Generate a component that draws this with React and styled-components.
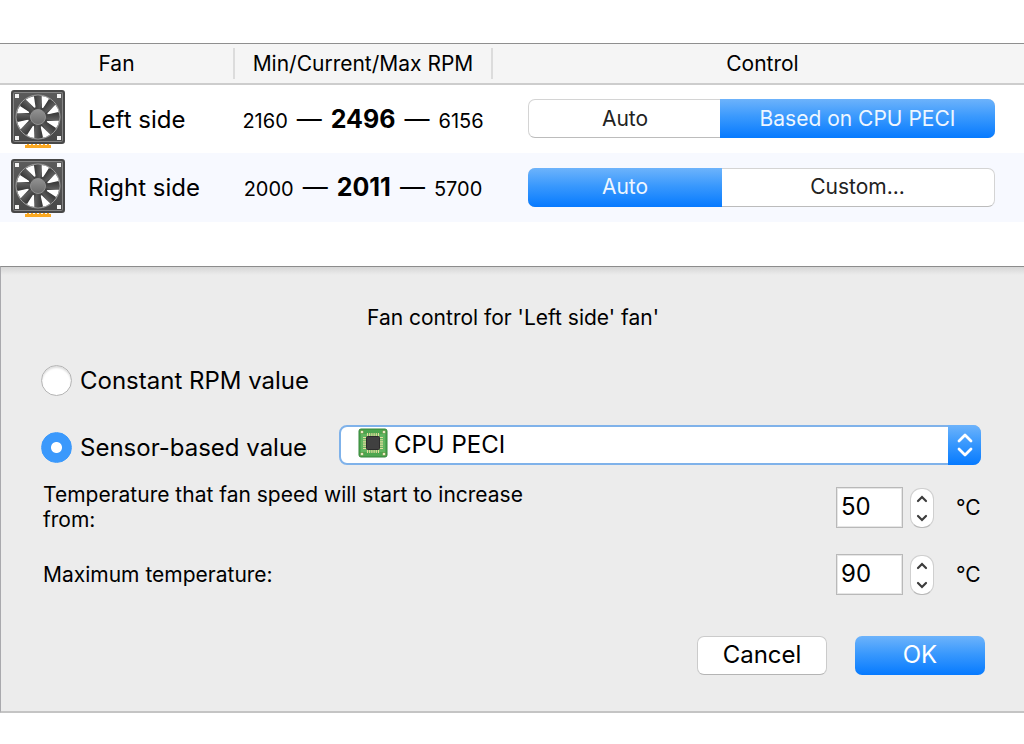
import React, { useState } from "react";
import styled, { createGlobalStyle, css } from "styled-components";

const GlobalStyle = createGlobalStyle`
  * { box-sizing: border-box; }
  body {
    margin: 0;
    background: #fff;
    color: #000;
    font-family: Inter, "Liberation Sans", sans-serif;
  }
  button, input, select { font: inherit; color: inherit; }
`;

const blueFill = css`
  background: linear-gradient(#6db3fb, #3a99fd 45%, #067aff);
`;

const Page = styled.main`
  padding-top: 43px;
`;

const FanTable = styled.table`
  width: 100%;
  table-layout: fixed;
  border-collapse: collapse;
  border-top: 1px solid #8f8f8f;
`;

const HeadRow = styled.tr`
  height: 40px;
  background: #f5f5f5;
  border-bottom: 2px solid #cdcdcd;
`;

const HeadCell = styled.th`
  width: ${({ $width }) => $width || "auto"};
  padding: 0;
  font-size: 21px;
  font-weight: 400;
`;

const HeadLabel = styled.div`
  line-height: 31px;
  border-right: ${({ $last }) => ($last ? "0" : "2px solid #dcdcdc")};
  padding-left: ${({ $last }) => ($last ? "8px" : "0")};
`;

const FanRow = styled.tr`
  height: 69px;
  background: ${({ $striped }) => ($striped ? "#f7f9ff" : "#fff")};
`;

const Cell = styled.td`
  padding: 0;
`;

const FanName = styled.div`
  display: flex;
  align-items: center;
  gap: 23px;
  padding: 1px 0 0 11px;
  font-size: 24px;
`;

const Speeds = styled.div`
  display: flex;
  justify-content: center;
  align-items: baseline;
  gap: 9px;
  padding-right: 2px;
  font-size: 20px;
`;

const Dash = styled.span`
  font-size: 25px;
`;

const CurrentSpeed = styled.strong`
  font-size: 25px;
  font-weight: 700;
`;

const Segments = styled.div`
  display: flex;
  height: 39px;
  margin: 0 29px 0 35px;
  border: 1px solid #d4d4d4;
  border-bottom-color: #bcbcbc;
  border-radius: 7px;
  background: #fff;
`;

const Segment = styled.button`
  flex: ${({ $grow }) => ($grow ? "1" : "0 0 194px")};
  margin: -1px;
  padding: 0 0 1px;
  border: 0;
  border-radius: ${({ $grow }) => ($grow ? "0 7px 7px 0" : "7px 0 0 7px")};
  background: transparent;
  font-size: 21px;
  color: #222;
  ${({ $active }) => $active && css`
    ${blueFill}
    color: #eef6ff;
  `}
`;

const Sheet = styled.form`
  margin-top: 44px;
  padding: 38px 39px 36px 40px;
  border: solid #a9a9ad;
  border-width: 1px 0 2px 1px;
  border-top-color: #8c8c8c;
  border-bottom-color: #c4c4c4;
  background: linear-gradient(#d6d6d6, #ececec 8px);
`;

const Title = styled.h1`
  margin: 0;
  font-size: 21px;
  line-height: 26px;
  font-weight: 400;
  text-align: center;
`;

const Options = styled.div`
  display: grid;
  gap: 15px;
  padding: 24px 4px 0 0;
`;

const Row = styled.div`
  display: flex;
  align-items: center;
  height: 52px;
`;

const RadioLabel = styled.label`
  display: flex;
  align-items: center;
  gap: 8px;
  width: 298px;
  font-size: 24px;
  white-space: nowrap;
`;

const Radio = styled.input`
  appearance: none;
  flex: none;
  width: 31px;
  height: 31px;
  margin: 0;
  border: 1px solid #b4b4b4;
  border-radius: 50%;
  background: #fff;
  box-shadow: inset 0 2px 2px #dedede;
  &:checked {
    border-color: #3b99fc;
    background: radial-gradient(circle, #fff 5px, #3b99fc 6px);
    box-shadow: none;
  }
`;

const SelectFrame = styled.div`
  position: relative;
  flex: 1;
  height: 40px;
  margin-bottom: 6px;
`;

const SensorSelect = styled.select`
  appearance: none;
  display: block;
  width: 100%;
  height: 40px;
  padding: 0 40px 1px 53px;
  border: 2px solid #7fb2ea;
  border-radius: 8px;
  background: #fff;
  font-size: 24px;
`;

const ChipMark = styled.span`
  position: absolute;
  left: 19px;
  top: 3px;
  display: flex;
  pointer-events: none;
`;

const SelectCap = styled.span`
  position: absolute;
  top: 0;
  right: 0;
  display: grid;
  place-items: center;
  width: 33px;
  height: 40px;
  border-radius: 0 8px 8px 0;
  pointer-events: none;
  ${blueFill}
`;

const LimitRow = styled.div`
  display: flex;
  align-items: center;
  height: 67px;
  padding-right: 4px;
  font-size: 21px;
  line-height: 25px;
`;

const LimitLabel = styled.label`
  width: 510px;
  margin-right: auto;
  padding-left: 2px;
`;

const NumberInput = styled.input`
  width: 67px;
  height: 41px;
  padding: 0 4px 1px;
  border: 1px solid #b9b9b9;
  border-radius: 0;
  background: #fff;
  box-shadow: inset 0 0 0 1px #e6e6e6;
  font-size: 24px;
`;

const Stepper = styled.div`
  display: flex;
  flex-direction: column;
  width: 24px;
  height: 40px;
  margin: 2px 22px 0 7px;
  border: 1px solid #cfcfcf;
  border-bottom-color: #b8b8b8;
  border-radius: 11px;
  background: #fff;
`;

const StepButton = styled.button`
  display: grid;
  place-items: center;
  flex: 1;
  padding: 0;
  border: 0;
  background: transparent;
`;

const Unit = styled.span`
  width: 25px;
`;

const Actions = styled.div`
  display: flex;
  justify-content: flex-end;
  gap: 28px;
  margin-top: 28px;
`;

const ActionButton = styled.button`
  width: 130px;
  height: 39px;
  padding: 0 0 1px;
  border: 1px solid #cbcbcb;
  border-bottom-color: #b4b4b4;
  border-radius: 7px;
  background: #fff;
  font-size: 24px;
  ${({ $primary }) => $primary && css`
    border: 0;
    ${blueFill}
    color: #fff;
  `}
`;

const BLADES = [0, 1, 2, 3, 4, 5, 6, 7];

function FanIcon({ id }) {
  return (
    <svg width="54" height="58" viewBox="0 0 54 58" aria-hidden="true">
      <defs>
        <linearGradient id={`${id}-frame`} x2="0" y2="1">
          <stop offset="0" stopColor="#5c5c5c" />
          <stop offset="1" stopColor="#484848" />
        </linearGradient>
        <linearGradient id={`${id}-blade`}>
          <stop offset="0" stopColor="#333" />
          <stop offset="1" stopColor="#666" />
        </linearGradient>
        <linearGradient id={`${id}-hub`} x2="0" y2="1">
          <stop offset="0" stopColor="#929292" />
          <stop offset="1" stopColor="#6a6a6a" />
        </linearGradient>
      </defs>
      <path d="M14 55h26v3H14zM16 53h2v3h-2zM20 53h2v3h-2zM24 53h2v3h-2zM28 53h2v3h-2zM32 53h2v3h-2zM36 53h2v3h-2z" fill="#fba922" />
      <rect x="1" y="1" width="52" height="52" rx="2" fill={`url(#${id}-frame)`} stroke="#484848" strokeWidth="2" />
      <rect x="2.500" y="2.500" width="49" height="49" rx="1" fill="none" stroke="#858585" />
      <path d="M4 4h4v4H4zM46 4h4v4h-4zM4 46h4v4H4zM46 46h4v4h-4z" fill="#f4f4f4" />
      <circle cx="27" cy="27" r="22" fill="#444" stroke="#a2a2a2" />
      {BLADES.map((n) => (
        <g key={n} transform={`rotate(${n * 45} 27 27)`}>
          <path d="M25 20 L22 6.500 Q27 5 31.500 6.500 L29 20Z" fill={`url(#${id}-blade)`} />
          <path d="M27.200 17 L22.600 6.200 Q27 5 31.400 6.200 L28.600 17Z" fill="#fff" transform="rotate(22 27 27)" />
        </g>
      ))}
      <circle cx="27" cy="27" r="7.500" fill={`url(#${id}-hub)`} stroke="#8f8f8f" />
    </svg>
  );
}

function ChipIcon() {
  return (
    <svg width="30" height="30" viewBox="0 0 30 30" aria-hidden="true">
      <rect x="1" y="1" width="28" height="28" rx="2" fill="#4da64f" stroke="#358538" />
      <rect x="3" y="6" width="24" height="18" fill="#62b560" />
      <g fill="#f3f3cf" stroke="#6b8b3d" strokeWidth=".6">
        <circle cx="4" cy="4" r="1.600" /><circle cx="26" cy="4" r="1.600" />
        <circle cx="4" cy="26" r="1.600" /><circle cx="26" cy="26" r="1.600" />
      </g>
      <path d="M9.500 5v20M11.700 5v20M13.900 5v20M16.100 5v20M18.300 5v20M20.500 5v20M5 9.500h20M5 11.700h20M5 13.900h20M5 16.100h20M5 18.300h20M5 20.500h20" stroke="#e6dc9c" strokeWidth="1.100" />
      <rect x="8.500" y="8.500" width="13" height="13" rx="1" fill="#404040" stroke="#2c2c2c" />
    </svg>
  );
}

function Chevron({ up }) {
  return (
    <svg width="12" height="8" viewBox="0 0 12 8" aria-hidden="true">
      <path d={up ? "M2 6l4-4 4 4" : "M2 2l4 4 4-4"} fill="none" stroke="#3c3c3c" strokeWidth="2.200" strokeLinecap="round" />
    </svg>
  );
}

const FANS = [
  { id: "left", name: "Left side", min: 2160, now: 2496, max: 6156, custom: "Based on CPU PECI", isCustom: true },
  { id: "right", name: "Right side", min: 2000, now: 2011, max: 5700, custom: "Custom...", isCustom: false },
];

function Limit({ id, label, initial }) {
  const [value, setValue] = useState(initial);
  return (
    <LimitRow>
      <LimitLabel htmlFor={id}>{label}</LimitLabel>
      <NumberInput id={id} inputMode="numeric" value={value} onChange={(e) => setValue(Number(e.target.value) || 0)} />
      <Stepper>
        <StepButton type="button" aria-label="Increase" onClick={() => setValue(value + 1)}><Chevron up /></StepButton>
        <StepButton type="button" aria-label="Decrease" onClick={() => setValue(value - 1)}><Chevron /></StepButton>
      </Stepper>
      <Unit>°C</Unit>
    </LimitRow>
  );
}

export default function App() {
  return (
    <Page>
      <GlobalStyle />
      <FanTable>
        <thead>
          <HeadRow>
            <HeadCell $width="235px"><HeadLabel>Fan</HeadLabel></HeadCell>
            <HeadCell $width="258px"><HeadLabel>Min/Current/Max RPM</HeadLabel></HeadCell>
            <HeadCell><HeadLabel $last>Control</HeadLabel></HeadCell>
          </HeadRow>
        </thead>
        <tbody>
          {FANS.map((fan, i) => (
            <FanRow key={fan.id} $striped={i % 2 === 1}>
              <Cell><FanName><FanIcon id={fan.id} />{fan.name}</FanName></Cell>
              <Cell>
                <Speeds>
                  <span>{fan.min}</span><Dash>—</Dash>
                  <CurrentSpeed>{fan.now}</CurrentSpeed>
                  <Dash>—</Dash><span>{fan.max}</span>
                </Speeds>
              </Cell>
              <Cell>
                <Segments>
                  <Segment type="button" $active={!fan.isCustom}>Auto</Segment>
                  <Segment type="button" $grow $active={fan.isCustom}>{fan.custom}</Segment>
                </Segments>
              </Cell>
            </FanRow>
          ))}
        </tbody>
      </FanTable>
      <Sheet onSubmit={(e) => e.preventDefault()}>
        <Title>Fan control for 'Left side' fan'</Title>
        <Options>
          <Row>
            <RadioLabel><Radio type="radio" name="mode" />Constant RPM value</RadioLabel>
          </Row>
          <Row>
            <RadioLabel><Radio type="radio" name="mode" defaultChecked />Sensor-based value</RadioLabel>
            <SelectFrame>
              <SensorSelect aria-label="Sensor"><option>CPU PECI</option></SensorSelect>
              <ChipMark><ChipIcon /></ChipMark>
              <SelectCap>
                <svg width="18" height="26" viewBox="0 0 18 26" aria-hidden="true">
                  <path d="M3 9l6-6 6 6M3 17l6 6 6-6" fill="none" stroke="#fff" strokeWidth="2.800" strokeLinecap="round" strokeLinejoin="round" />
                </svg>
              </SelectCap>
            </SelectFrame>
          </Row>
        </Options>
        <Limit id="start" label="Temperature that fan speed will start to increase from:" initial={50} />
        <Limit id="max" label="Maximum temperature:" initial={90} />
        <Actions>
          <ActionButton type="button">Cancel</ActionButton>
          <ActionButton type="submit" $primary>OK</ActionButton>
        </Actions>
      </Sheet>
    </Page>
  );
}
